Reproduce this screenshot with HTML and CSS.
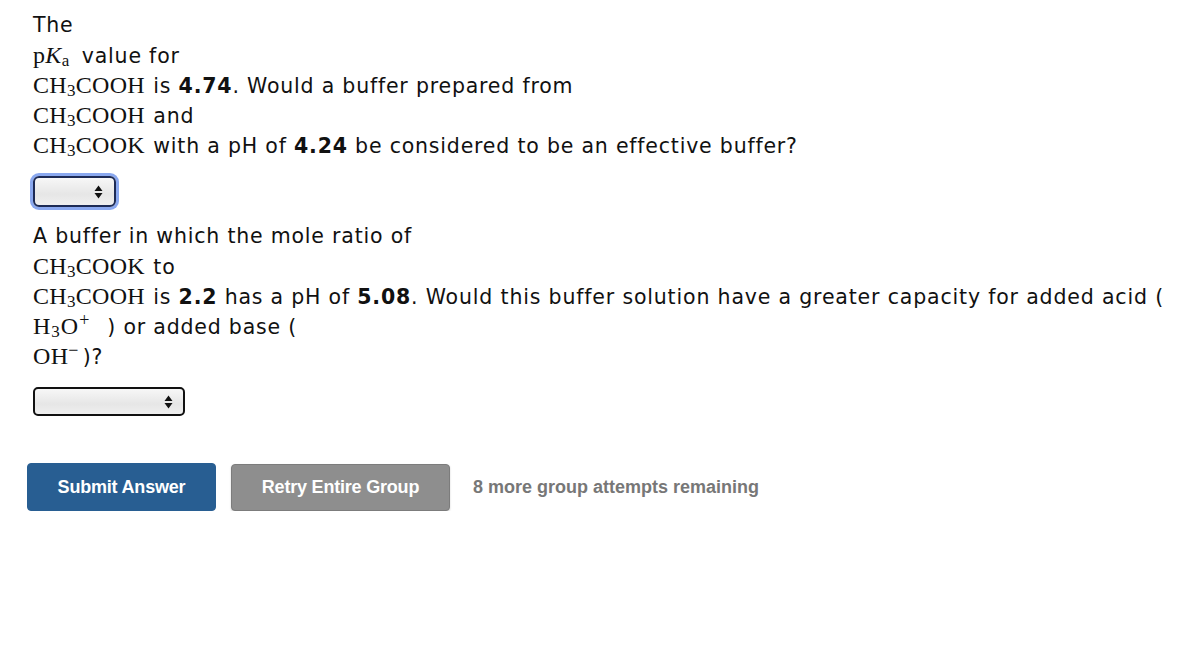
FILE: index.html
```html
<!DOCTYPE html>
<html>
<head>
<meta charset="utf-8">
<link rel="stylesheet" href="styles.css">
</head>
<body>
<div class="page">
  <div class="question">
    <div class="line">The</div>
    <div class="line"><span class="m pka">p<i>K</i><sub class="msub">a</sub></span> value for</div>
    <div class="line"><span class="m">CH<sub class="msub">3</sub>COOH</span> is <b>4.74</b>. Would a buffer prepared from</div>
    <div class="line"><span class="m">CH<sub class="msub">3</sub>COOH</span> and</div>
    <div class="line"><span class="m">CH<sub class="msub">3</sub>COOK</span> with a pH of <b>4.24</b> be considered to be an effective buffer?</div>
  </div>
  <div class="select-row first">
    <div class="select focus">
      <svg class="arrows" width="9" height="14" viewBox="0 0 9 14"><path d="M4.5 0.5 L8.5 6 H0.5 Z M0.5 8 H8.5 L4.5 13.5 Z" fill="#111"/></svg>
    </div>
  </div>
  <div class="question second">
    <div class="line">A buffer in which the mole ratio of</div>
    <div class="line"><span class="m">CH<sub class="msub">3</sub>COOK</span> to</div>
    <div class="line"><span class="m">CH<sub class="msub">3</sub>COOH</span> is <b>2.2</b> has a pH of <b>5.08</b>. <span class="wide-run">Would this buffer solution have a greater capacity for added acid (</span></div>
    <div class="line"><span class="m h3o">H<sub class="msub">3</sub>O<sup class="msup">+</sup></span>) or added base (</div>
    <div class="line"><span class="m">OH<sup class="msup">&minus;</sup></span>)?</div>
  </div>
  <div class="select-row second-sel">
    <div class="select wide">
      <svg class="arrows" width="9" height="14" viewBox="0 0 9 14"><path d="M4.5 0.5 L8.5 6 H0.5 Z M0.5 8 H8.5 L4.5 13.5 Z" fill="#111"/></svg>
    </div>
  </div>
  <div class="actions">
    <button class="btn submit">Submit Answer</button>
    <button class="btn retry">Retry Entire Group</button>
    <span class="remaining">8 more group attempts remaining</span>
  </div>
</div>
</body>
</html>
```
FILE: styles.css
```css
html, body {
  margin: 0;
  padding: 0;
  background: #fff;
}
.page {
  padding: 10px 0 0 33px;
  font-family: "DejaVu Sans", Verdana, sans-serif;
  font-size: 20.5px;
  letter-spacing: 0.8px;
  color: #111;
}
.line {
  height: 30px;
  line-height: 30px;
  white-space: nowrap;
}
.m {
  font-family: "Liberation Serif", "Times New Roman", serif;
  font-size: 24px;
  letter-spacing: 0.3px;
  margin-right: 1px;
}
.m.pka {
  margin-right: 5px;
}
.m.h3o {
  letter-spacing: 1px;
  margin-right: 14px;
}
.msub {
  font-size: 17px;
  vertical-align: -3px;
  line-height: 0;
}
.msup {
  font-size: 18px;
  vertical-align: 8px;
  line-height: 0;
  margin-right: 3px;
}
.wide-run {
  letter-spacing: 0.83px;
}
b {
  font-weight: bold;
}
.select-row.first {
  padding: 16px 0 0 0;
  height: 40px;
}
.select {
  box-sizing: border-box;
  height: 31px;
  width: 83px;
  border: 2px solid #1c2a55;
  border-radius: 6px;
  background: linear-gradient(#f7f7f7, #e6e6e6 60%, #efefef);
  display: flex;
  align-items: center;
  justify-content: flex-end;
  padding-right: 11px;
}
.select.focus {
  box-shadow: 0 0 0 3px #8aa8ef;
}
.select.wide {
  width: 152px;
  height: 29px;
  border-color: #111;
  border-radius: 5px;
  padding-right: 10px;
}
.question.second {
  margin-top: 5px;
}
.select-row.second-sel {
  padding: 16px 0 0 0;
}
.actions {
  display: flex;
  align-items: center;
  margin-top: 47px;
  margin-left: -6px;
  gap: 15px;
}
.btn {
  font-family: "Liberation Sans", Arial, sans-serif;
  font-weight: bold;
  font-size: 18px;
  letter-spacing: -0.2px;
  color: #fff;
  border-radius: 4px;
  height: 48px;
  padding: 0;
  cursor: pointer;
}
.submit {
  width: 189px;
  background: #285e92;
  border: 1px solid #285e92;
}
.retry {
  width: 219px;
  height: 47px;
  background: #8e8e8e;
  border: 1px solid #7c7c7c;
  box-shadow: 0 1px 2px rgba(0,0,0,0.2);
}
.remaining {
  margin-left: 8px;
  font-family: "Liberation Sans", Arial, sans-serif;
  font-weight: bold;
  font-size: 18px;
  letter-spacing: 0px;
  color: #777;
}
```
